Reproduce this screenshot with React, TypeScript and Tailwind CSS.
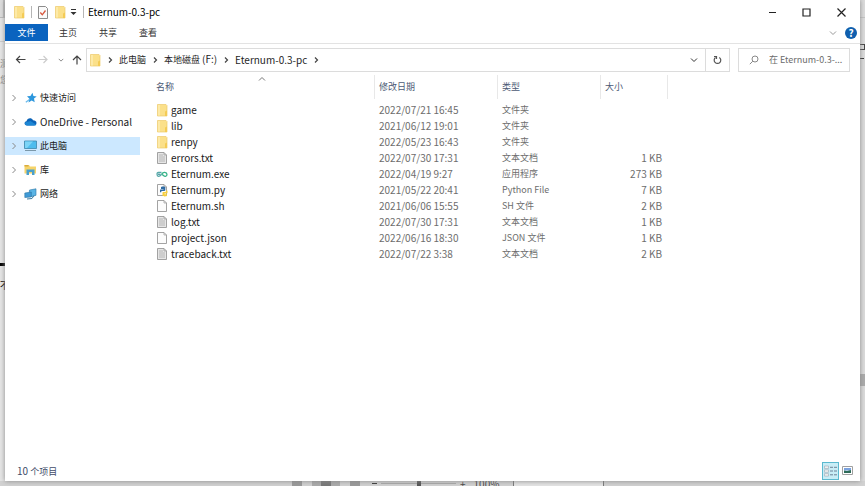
import type { ReactNode } from 'react';

type FileKind = 'folder' | 'text' | 'exe' | 'python' | 'blank';

interface FileItem {
  name: string;
  date: string;
  type: string;
  size?: string;
  kind: FileKind;
}

const files: FileItem[] = [
  { name: 'game', date: '2022/07/21 16:45', type: '文件夹', kind: 'folder' },
  { name: 'lib', date: '2021/06/12 19:01', type: '文件夹', kind: 'folder' },
  { name: 'renpy', date: '2022/05/23 16:43', type: '文件夹', kind: 'folder' },
  { name: 'errors.txt', date: '2022/07/30 17:31', type: '文本文档', size: '1 KB', kind: 'text' },
  { name: 'Eternum.exe', date: '2022/04/19 9:27', type: '应用程序', size: '273 KB', kind: 'exe' },
  { name: 'Eternum.py', date: '2021/05/22 20:41', type: 'Python File', size: '7 KB', kind: 'python' },
  { name: 'Eternum.sh', date: '2021/06/06 15:55', type: 'SH 文件', size: '2 KB', kind: 'blank' },
  { name: 'log.txt', date: '2022/07/30 17:31', type: '文本文档', size: '1 KB', kind: 'text' },
  { name: 'project.json', date: '2022/06/16 18:30', type: 'JSON 文件', size: '1 KB', kind: 'blank' },
  { name: 'traceback.txt', date: '2022/07/22 3:38', type: '文本文档', size: '2 KB', kind: 'text' },
];

function FolderIcon() {
  return (
    <svg width="12" height="14" viewBox="0 0 12 14" aria-hidden="true">
      <path d="M1.500 1.500H10l1 1V13H1.500z" fill="#fbe08a" stroke="#ecca6c" strokeWidth=".7" />
      <path d="M9 8.500l2-1V13H9z" fill="#f4cb55" />
      <path d="M2 2h2v10.500H2z" fill="#fdeaa8" />
    </svg>
  );
}

function PageIcon({ kind }: { kind: FileKind }) {
  return (
    <svg width="12" height="14" viewBox="0 0 12 14" aria-hidden="true">
      <path d="M1.500 1.500h6.500l2.500 2.500v8.500h-9z" fill={kind === 'text' ? '#e6e6e6' : '#fcfcfc'} stroke="#999" strokeWidth=".9" />
      <path d="M8 1.500V4h2.500" fill="none" stroke="#999" strokeWidth=".7" />
      {kind === 'text' && <path d="M3 4h4M3 6h6M3 8h6M3 10h6" stroke="#b0b0b0" strokeWidth=".9" />}
      {kind === 'python' && (
        <>
          <path d="M4 8.500V6.500h3.500V6H5V4.200C5 3.200 9.300 3.200 9.300 4.500v2.600c0 .6-.5.9-1 .9H6.200c-.7 0-1 .4-1 1.200H4z" fill="#2f6ca5" />
          <path d="M11.500 7.500v2c0 .8-.3 1-1 1H8.500v.7h2.500v1.300c0 1.200-4.500 1.200-4.500 0V10c0-.7.400-1 1-1H9c.7 0 1-.4 1-1.500z" fill="#f5ce3e" />
        </>
      )}
    </svg>
  );
}

function ExeIcon() {
  return (
    <svg width="12" height="14" viewBox="0 0 12 14" fill="none" strokeWidth="1.300" aria-hidden="true">
      <path d="M5.500 5.300H2.300C.7 5.300.5 9 2.500 9.300c1.500.2 2.200-1 3-2" stroke="#55a8a8" />
      <path d="M2 7.200h2.500" stroke="#3d8f9c" />
      <path d="M5.500 7.300c.8-1.200 1.700-2.200 3.200-2C11.700 5.700 11.500 9 9.500 9.300c-2 .2-2.500-2-4-2" stroke="#37b389" />
    </svg>
  );
}

function FileIcon({ kind }: { kind: FileKind }) {
  if (kind === 'folder') return <FolderIcon />;
  if (kind === 'exe') return <ExeIcon />;
  return <PageIcon kind={kind} />;
}

function Chevron({ direction, className }: { direction: 'up' | 'down' | 'right'; className: string }) {
  const paths = {
    up: 'M1 5.500L4 2.500L7 5.500',
    down: 'M1 2.500L4 5.500L7 2.500',
    right: 'M2.500 1L5.500 4L2.500 7',
  };
  return (
    <svg width="8" height="8" viewBox="0 0 8 8" fill="none" stroke="currentColor" className={className} aria-hidden="true">
      <path d={paths[direction]} />
    </svg>
  );
}

// Small bold arrow between two folders of the path
function PathArrow() {
  return (
    <svg width="8" height="8" viewBox="0 0 8 8" fill="none" stroke="#444" strokeWidth="1.200" className="mx-1" aria-hidden="true">
      <path d="M3 1.500L5.500 4L3 6.500" />
    </svg>
  );
}

function TitleBar() {
  return (
    <header className="flex h-6 items-center">
      <div className="flex items-center pl-2">
        <FolderIcon />
        <span className="ml-1.5 h-3 w-px bg-[#b5b5b5]" />
        <button aria-label="属性" className="ml-1.5">
          <svg width="10" height="13" viewBox="0 0 10 13" fill="none">
            <path d="M.5.5h7l2 2v10h-9z" fill="#fafafa" stroke="#8c8c8c" />
            <path d="M2.300 6.500l2 2.300 3.200-4.300" stroke="#d8573d" strokeWidth="1.300" />
          </svg>
        </button>
        <button aria-label="新建文件夹" className="ml-1.5"><FolderIcon /></button>
        <button aria-label="自定义快速访问工具栏" className="ml-1">
          <svg width="7" height="8" viewBox="0 0 7 8" fill="#333">
            <path d="M1 1h5v1H1zM.5 4h6l-3 3z" />
          </svg>
        </button>
        <span className="ml-1.5 h-3 w-px bg-[#b5b5b5]" />
      </div>
      <h1 className="ml-1 flex-1 text-[10px] text-black">Eternum-0.3-pc</h1>
      <div className="flex pr-0.5">
        <button aria-label="最小化" className="flex h-6 w-[34px] items-center justify-center">
          <svg width="9" height="9" stroke="#222"><path d="M1 4.500h7" /></svg>
        </button>
        <button aria-label="最大化" className="flex h-6 w-[35px] items-center justify-center">
          <svg width="9" height="9" fill="none" stroke="#222"><path d="M1 1h7v7H1z" strokeWidth="1.200" /></svg>
        </button>
        <button aria-label="关闭" className="flex h-6 w-[34px] items-center justify-center">
          <svg width="9" height="9" stroke="#222" strokeWidth="1.200"><path d="M.5.5l8 8M8.500.5l-8 8" /></svg>
        </button>
      </div>
    </header>
  );
}

function RibbonTabs() {
  return (
    <div className="flex h-5 items-start border-b border-[#e3e3e3]">
      <button className="h-[17px] w-[43px] bg-[#0a63bf] text-white">文件</button>
      <button className="h-[17px] w-10 text-[#333]">主页</button>
      <button className="h-[17px] w-10 text-[#333]">共享</button>
      <button className="h-[17px] w-10 text-[#333]">查看</button>
      <div className="ml-auto flex h-[18px] items-center gap-2 pr-[3px]">
        <button aria-label="展开功能区"><Chevron direction="down" className="text-[#999]" /></button>
        <button aria-label="帮助" className="h-3 w-3 rounded-full bg-[#0f5fae] text-center text-[10px] leading-3 font-bold text-white">?</button>
      </div>
    </div>
  );
}

function NavBar() {
  return (
    <div className="flex h-[31px] items-center pr-2.5">
      <div className="flex w-[81px] items-center pl-2.5">
        <button aria-label="后退">
          <svg width="11" height="9" fill="none" stroke="#444" strokeWidth="1.200"><path d="M10.500 4.500H1.500M5 1L1.500 4.500L5 8" /></svg>
        </button>
        <button aria-label="前进" className="ml-3">
          <svg width="10" height="9" fill="none" stroke="#ccc" strokeWidth="1.200"><path d="M.5 4.500H9M5.500 1L9 4.500L5.500 8" /></svg>
        </button>
        <button aria-label="最近浏览的位置" className="ml-2.5"><Chevron direction="down" className="h-1.5 w-1.5 text-[#666]" /></button>
        <button aria-label="上移" className="ml-2">
          <svg width="10" height="10" fill="none" stroke="#444" strokeWidth="1.200"><path d="M5 9.500V1M1 5L5 1L9 5" /></svg>
        </button>
      </div>
      <div className="flex h-6 flex-1 items-center border border-[#dcdcdc]">
        <nav aria-label="路径" className="flex flex-1 items-center gap-px pl-0.5 text-[#1f1f1f]">
          <FolderIcon />
          <PathArrow />
          <a href="#computer">此电脑</a>
          <PathArrow />
          <a href="#drive">本地磁盘 <span className="text-[10px]">(F:)</span></a>
          <PathArrow />
          <a href="#folder" className="text-[10px]">Eternum-0.3-pc</a>
          <PathArrow />
        </nav>
        <button aria-label="以前的位置" className="px-[7px]"><Chevron direction="down" className="text-[#333]" /></button>
        <button aria-label="刷新" className="flex h-full w-6 items-center justify-center border-l border-[#dcdcdc]">
          <svg width="9" height="10" viewBox="0 0 9 10" fill="none" stroke="#555" strokeWidth="1.200">
            <path d="M6.300 2.400A3.300 3.300 0 1 1 2.500 2.500M1 1.500h2.500V4" />
          </svg>
        </button>
      </div>
      <div className="ml-2 flex h-6 w-28 items-center border border-[#dcdcdc] pl-2.5">
        <svg width="10" height="10" fill="none" stroke="#888" className="shrink-0"><circle cx="6" cy="4" r="3" /><path d="M3.800 6.200L.8 9.200" /></svg>
        <input aria-label="搜索" placeholder="在 Eternum-0.3-..." className="ml-2.5 w-full min-w-0 outline-none placeholder:text-[#6b6b6b]" />
      </div>
    </div>
  );
}

function SidebarItem({ icon, active, children }: { icon: ReactNode; active?: boolean; children: ReactNode }) {
  return (
    <li>
      <a href="#tree" className={active ? 'flex h-[18px] items-center bg-[#cce8ff] pl-[5px]' : 'flex h-[18px] items-center pl-[5px]'}>
        <Chevron direction="right" className="text-[#888]" />
        <span className="mr-[3px] ml-1.5 flex w-[13px] justify-center">{icon}</span>
        {children}
      </a>
    </li>
  );
}

function Sidebar() {
  return (
    <nav aria-label="导航窗格" className="w-[145px] pt-[14px] pr-2.5 text-[#1a1a1a]">
      <ul className="flex flex-col gap-1.5">
        <SidebarItem
          icon={
            <svg width="12" height="12" viewBox="0 0 12 12">
              <path d="M7.500.8l.9 3.200 3.300.4-2.700 2 .7 3.800-3-1.800-3.200 2 .9-3.700L2 4.300l3.400-.4z" fill="#2d97dd" />
              <path d="M4.500 7.500L.8 10.300" stroke="#68b9eb" strokeWidth="1.200" />
            </svg>
          }
        >
          快速访问
        </SidebarItem>
        <SidebarItem
          icon={
            <svg width="13" height="10" viewBox="0 0 13 10">
              <path d="M3 8.500C-.2 8.500-.2 4.600 2.500 4.200 3.200 1 7.500.2 9 3.300c2 0 3.500 1 3.500 2.800S11 8.500 10 8.500z" fill="#0b63b8" />
              <path d="M3 8.500C1 8.500.3 6.500 1.500 5.300L6.500 4l5.700 3.700c-.6.8-1.300.8-2.200.8z" fill="#1c86d4" />
            </svg>
          }
        >
          <span className="text-[10px]">OneDrive - Personal</span>
        </SidebarItem>
        <SidebarItem
          active
          icon={
            <svg width="13" height="12" viewBox="0 0 13 12">
              <path d="M.5 1h12v7.500H.5z" fill="#4dbcee" stroke="#3d87ab" strokeWidth=".8" />
              <path d="M1 1.500h8L3 8H1z" fill="#7bd4f7" />
              <path d="M1 10.500h11" stroke="#7b98aa" />
            </svg>
          }
        >
          此电脑
        </SidebarItem>
        <SidebarItem
          icon={
            <svg width="13" height="12" viewBox="0 0 13 12">
              <path d="M.5 1h4.500l1 1.500h6V9.500H.5z" fill="#f6d46a" />
              <path d="M.5 1h4v1.500h-4z" fill="#d9ab3c" />
              <path d="M2.500 11V5.500h8V11H8V8H5v3z" fill="#4a9fcc" />
            </svg>
          }
        >
          库
        </SidebarItem>
        <SidebarItem
          icon={
            <svg width="13" height="12" viewBox="0 0 13 12">
              <path d="M5.500 2L12 .8v6.500L8 8.500H5z" fill="#5ab4e5" stroke="#2b75a5" strokeWidth=".6" />
              <path d="M.8 5l6.500-1v5L.8 9.500z" fill="#3f9ad6" stroke="#2b75a5" strokeWidth=".6" />
              <path d="M3 11l5-.5 2-3" fill="none" stroke="#3e7ba0" />
            </svg>
          }
        >
          网络
        </SidebarItem>
      </ul>
    </nav>
  );
}

function FileTable() {
  return (
    <div className="min-w-0 flex-1">
      <table className="w-[518px] table-fixed border-separate border-spacing-0 text-left">
        <colgroup>
          <col className="w-[225px]" />
          <col className="w-[123px]" />
          <col className="w-[103px]" />
          <col className="w-[67px]" />
        </colgroup>
        <thead className="text-[#4c5a75]">
          <tr className="h-6">
            <th className="relative border-r border-[#e8e8e8] pl-1.5 font-normal">
              名称
              <Chevron direction="up" className="absolute top-0 left-1/2 -ml-1 text-[#777]" />
            </th>
            <th className="border-r border-[#e8e8e8] pl-1 font-normal">修改日期</th>
            <th className="border-r border-[#e8e8e8] pl-1 font-normal">类型</th>
            <th className="border-r border-[#e8e8e8] pl-1 font-normal">大小</th>
          </tr>
        </thead>
        <tbody className="text-[#6d6d6d] before:block before:h-[3px]">
          {files.map((file) => (
            <tr key={file.name} className="h-4">
              <td className="p-0 pl-1.5">
                <a href="#file" className="flex items-center gap-[3px] text-[10px] text-[#1a1a1a]">
                  <FileIcon kind={file.kind} />
                  {file.name}
                </a>
              </td>
              <td className="p-0 pl-1 text-[10px]">{file.date}</td>
              <td className="p-0 pl-1">{file.type}</td>
              <td className="p-0 pr-1.5 text-right text-[10px]">{file.size}</td>
            </tr>
          ))}
        </tbody>
      </table>
    </div>
  );
}

function StatusBar() {
  return (
    <footer className="flex h-5 items-center pr-[7px] pl-3 text-[#3f4c68]">
      <span className="flex-1"><span className="text-[10px]">10</span> 个项目</span>
      <button aria-label="详细信息" className="flex h-[18px] w-[17px] items-center justify-center border border-[#5bb9cf] bg-[#c8edf6]">
        <svg width="13" height="12" viewBox="0 0 13 12">
          <path d="M.5 1h4v2.500h-4zM.5 4.800h4v2.500h-4zM.5 8.600h4v2.500h-4z" fill="#eee" stroke="#9ba9b5" strokeWidth=".6" />
          <path d="M6 2.300h3M10 2.300h3M6 6h3M10 6h3M6 9.800h3M10 9.800h3" stroke="#6d8298" />
        </svg>
      </button>
      <button aria-label="大图标" className="ml-[3px]">
        <svg width="11" height="10" viewBox="0 0 11 10">
          <path d="M.5.5h10v8H.5z" fill="#fff" stroke="#a0a0a0" />
          <path d="M2 2h7v2.500H2z" fill="#7aa2df" />
          <path d="M2 4.500l3 .5 4-1V7H2z" fill="#2d6b58" />
        </svg>
      </button>
    </footer>
  );
}

export default function App() {
  return (
    <div className="flex min-h-screen flex-col bg-[#d9d9d9] font-['Noto_Sans_CJK_SC',sans-serif] text-[9px] leading-3">
      <div className="flex flex-1">
        {/* Document window behind, left edge */}
        <div className="w-[5px] overflow-hidden bg-[#e6e6e6] text-[#888]">
          <div className="h-[18px] border-r-2 border-b border-[#bbb] bg-[#ddd]" />
          <div className="h-6 border-b border-[#ccc]" />
          <div className="pt-4">测</div>
          <div className="pt-1">您</div>
          <div className="mt-[177px] h-[3px] bg-black" />
          <div className="mt-3.5 text-black">不</div>
        </div>

        <main className="z-10 flex min-w-0 flex-1 flex-col bg-white shadow-[0_0_5px_#888]">
          <TitleBar />
          <RibbonTabs />
          <NavBar />
          <div className="flex flex-1">
            <Sidebar />
            <FileTable />
          </div>
          <StatusBar />
        </main>

        {/* Document window behind, right edge */}
        <div className="w-[5px] bg-[#dcdcdc]">
          <div className="h-[18px] border-b border-[#c4c4c4]" />
          <div className="mt-[26px] h-1.5 border border-l-0 border-[#444]" />
          <div className="mt-2 h-px w-1 bg-[#333]" />
          <div className="mt-[315px] h-3 bg-[#ababab]" />
        </div>
      </div>

      {/* Zoom bar of the document window behind */}
      <div className="flex h-[5px] items-center overflow-hidden bg-[#d2d2d2] text-[10px] leading-[6px] text-[#444]">
        <div className="ml-[292px] h-full w-2.5 bg-[#999]" />
        <div className="ml-2.5 flex h-full w-7 justify-center bg-[#aaa]"><span className="w-2.5 bg-[#777]" /></div>
        <div className="ml-2.5 h-full w-2.5 bg-[#999]" />
        <div className="ml-3 h-px w-[5px] bg-[#333]" />
        <div className="ml-1 flex h-full w-[75px] items-center justify-center">
          <span className="h-px flex-1 bg-[#aaa]" />
          <span className="h-full w-1 bg-[#555]" />
          <span className="h-px flex-1 bg-[#aaa]" />
        </div>
        <span className="ml-1">+</span>
        <span className="ml-2 self-start">100%</span>
        <div className="ml-3.5 h-full w-[91px] border-x border-[#777] bg-[#e4e4e4]" />
      </div>
    </div>
  );
}
